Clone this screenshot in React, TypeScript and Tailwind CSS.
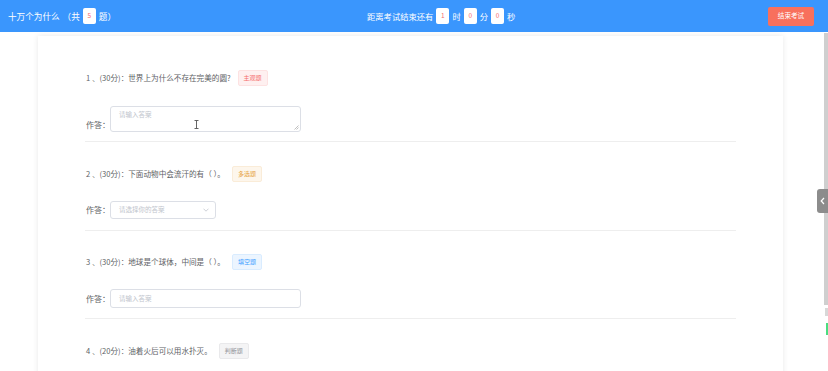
import React from "react";

const font = { fontFamily: '"Noto Sans CJK SC", "Noto Sans", sans-serif' };

function Tag({ text, kind }: { text: string; kind: "danger" | "warning" | "primary" | "info" }) {
  const cls =
    kind === "danger"
      ? "bg-[#fef0f0] border-[#fde2e2] text-[#f56c6c]"
      : kind === "warning"
      ? "bg-[#fdf6ec] border-[#faecd8] text-[#e6a23c]"
      : kind === "primary"
      ? "bg-[#ecf5ff] border-[#d9ecff] text-[#409eff]"
      : "bg-[#f4f4f5] border-[#e9e9eb] text-[#909399]";
  return (
    <span className={`ml-[7px] inline-flex h-[16px] items-center rounded-[2px] border px-[5px] text-[6px] leading-none ${cls}`}>
      {text}
    </span>
  );
}

function QRow({ text, tag }: { text: string; tag: React.ReactNode }) {
  return (
    <div className="flex h-[14px] items-center text-[7.6px] text-[#606266]">
      <span className="whitespace-pre">{text}</span>
      {tag}
    </div>
  );
}

function Divider({ mt }: { mt: string }) {
  return <div className={`${mt} h-px bg-[#eeeeee]`} />;
}

function Box({ v }: { v: string }) {
  return (
    <span className="mx-[3px] inline-flex h-[16px] w-[13px] items-center justify-center rounded-[2px] bg-white text-[6.5px] text-[#f56c6c]">
      {v}
    </span>
  );
}

export default function App() {
  return (
    <div className="relative h-[371px] w-[828px] overflow-hidden bg-white" style={font}>
      {/* header */}
      <div className="relative flex h-[32px] items-center bg-[#3a96fd] pl-[8px] pr-[14px] text-white">
        <div className="flex items-center text-[8.6px]">
          <span>十万个为什么</span>
          <span className="ml-[3px]">（共</span>
          <Box v="5" />
          <span>题）</span>
        </div>
        <div className="absolute left-[367px] top-0 flex h-[32px] items-center text-[8.3px]">
          <span>距离考试结束还有</span>
          <Box v="1" />
          <span>时</span>
          <Box v="0" />
          <span>分</span>
          <Box v="0" />
          <span>秒</span>
        </div>
        <div className="ml-auto flex h-[19px] w-[46px] items-center justify-center rounded-[2px] bg-[#f8705d] text-[6.6px] text-white">
          结束考试
        </div>
      </div>

      {/* body */}
      <div className="pl-[38px] pr-[45px] pt-[4px]">
        <div className="h-[400px] bg-white px-[47px] pt-[35px] shadow-[0_0_6px_rgba(0,0,0,0.09)]">
          <div className="pl-[1px]">
            <QRow text="1 、(30分)：世界上为什么不存在完美的圆?" tag={<Tag text="主观题" kind="danger" />} />
            <div className="mt-[21px] flex items-end">
              <span className="mb-[1px] w-[24px] text-[8px] text-[#606266]">作答：</span>
              <div className="relative h-[26px] w-[191px] rounded-[3px] border border-[#dcdfe6] bg-white px-[8px] pt-[3px] text-[6.5px] text-[#c0c4cc]">
                请输入答案
                <svg className="absolute bottom-[1px] right-[1px]" width="5" height="5" viewBox="0 0 5 5">
                  <path d="M4.5 0.5 L0.5 4.5 M4.5 2.5 L2.5 4.5" stroke="#b0b0b0" strokeWidth="0.8" />
                </svg>
                <svg className="absolute left-[83px] top-[13px]" width="5" height="9" viewBox="0 0 5 9">
                  <path d="M0.5 0.5 H4.5 M2.5 0.5 V8.5 M0.5 8.5 H4.5" stroke="#555" strokeWidth="0.9" fill="none" />
                </svg>
              </div>
            </div>
          </div>
          <Divider mt="mt-[9px]" />

          <div className="mt-[25px] pl-[1px]">
            <QRow text="2 、(30分)：下面动物中会流汗的有（ ）。" tag={<Tag text="多选题" kind="warning" />} />
            <div className="mt-[20px] flex items-center">
              <span className="w-[24px] text-[8px] text-[#606266]">作答：</span>
              <div className="flex h-[18px] w-[106px] items-center justify-between rounded-[3px] border border-[#dcdfe6] bg-white pl-[8px] pr-[6px] text-[6.5px] text-[#c0c4cc]">
                <span>请选择你的答案</span>
                <svg width="6" height="4" viewBox="0 0 6 4">
                  <path d="M0.5 0.7 L3 3.2 L5.5 0.7" stroke="#c0c4cc" strokeWidth="0.8" fill="none" />
                </svg>
              </div>
            </div>
          </div>
          <Divider mt="mt-[11px]" />

          <div className="mt-[24px] pl-[1px]">
            <QRow text="3 、(30分)：地球是个球体，中间是（ ）。" tag={<Tag text="填空题" kind="primary" />} />
            <div className="mt-[20px] flex items-center">
              <span className="w-[24px] text-[8px] text-[#606266]">作答：</span>
              <div className="flex h-[19px] w-[191px] items-center rounded-[3px] border border-[#dcdfe6] bg-white px-[8px] text-[6.5px] text-[#c0c4cc]">
                请输入答案
              </div>
            </div>
          </div>
          <Divider mt="mt-[10px]" />

          <div className="mt-[25px] pl-[1px]">
            <QRow text="4 、(20分)：油着火后可以用水扑灭。" tag={<Tag text="判断题" kind="info" />} />
          </div>
        </div>
      </div>

      {/* right scroll strip */}
      <div className="absolute right-0 top-[33px] h-[272px] w-[4px] bg-[#cfcfcf]" />
      <div className="absolute right-0 top-[308px] h-[8px] w-[3px] bg-[#d8d8d8]" />
      <div className="absolute right-0 top-[323px] h-[12px] w-[2px] bg-[#4ade80]" />
      {/* side handle */}
      <div className="absolute right-0 top-[189px] flex h-[24px] w-[11px] items-center justify-center rounded-l-[3px] bg-[#8c8c8c]">
        <svg width="5" height="8" viewBox="0 0 5 8">
          <path d="M4 1 L1.2 4 L4 7" stroke="white" strokeWidth="1.2" fill="none" />
        </svg>
      </div>
    </div>
  );
}
